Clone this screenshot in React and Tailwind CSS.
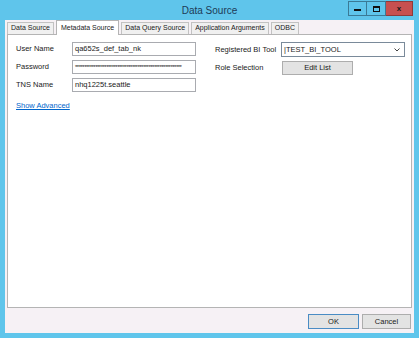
const font = { fontFamily: '"Liberation Sans", Arial, sans-serif' };

function Field({ label, value }) {
  return (
    <div className="flex items-center h-[14px]">
      <span className="w-[56px] text-[7.5px] text-[#1a1a1a]">{label}</span>
      <div className="w-[124px] h-[14px] border border-[#a9abb0] bg-white flex items-center px-[2px] text-[7.5px] text-[#1a1a1a] overflow-hidden whitespace-nowrap">
        {value}
      </div>
    </div>
  );
}

function Tab({ label, active }) {
  if (active) {
    return (
      <div className="h-[15px] px-[4px] -mb-px mr-[2px] bg-white border border-b-0 border-[#b4b4b4] flex items-center text-[7px] text-[#1a1a1a] relative z-10">
        {label}
      </div>
    );
  }
  return (
    <div className="h-[12px] px-[3px] mr-[2px] bg-[#f0f0f0] border border-b-0 border-[#c2c2c2] flex items-center text-[7px] text-[#1a1a1a]">
      {label}
    </div>
  );
}

export default function App() {
  return (
    <div className="w-[419px] h-[338px] bg-[#5fc5eb] flex flex-col" style={font}>
      {/* title bar */}
      <div className="h-[20px] flex items-start">
        <div className="w-[71px]" />
        <div className="flex-1 text-center text-[10px] leading-[21px] text-[#1d3b57]">Data Source</div>
        <div className="flex mt-[1px] mr-[6px]">
          <div className="w-[19px] h-[15px] border border-[#3a7a96] flex items-end justify-center pb-[4px]">
            <div className="w-[7px] h-[2px] bg-[#111]" />
          </div>
          <div className="w-[19px] h-[15px] border border-l-0 border-[#3a7a96] flex items-center justify-center">
            <div className="w-[7px] h-[6px] border-[1.5px] border-t-[2.5px] border-[#111]" />
          </div>
          <div className="w-[27px] h-[15px] bg-[#c75050] border border-l-0 border-[#8e3a3a] flex items-center justify-center text-[8px] font-bold text-[#1a1a1a]">
            x
          </div>
        </div>
      </div>

      {/* client area */}
      <div className="flex-1 mx-[5px] mb-[5px] bg-[#f6f1f5] flex flex-col pl-[2px] pr-[2px]">
        <div className="flex items-end h-[14px]">
          <Tab label="Data Source" />
          <Tab label="Metadata Source" active />
          <Tab label="Data Query Source" />
          <Tab label="Application Arguments" />
          <Tab label="ODBC" />
        </div>
        <div className="h-[274px] bg-white border border-[#b4b4b4] flex flex-col pt-[7px] pl-[8px] pr-[6px]">
          <div className="flex">
            <div className="flex flex-col gap-[4px] w-[201px]">
              <Field label="User Name" value="qa652s_def_tab_nk" />
              <Field label="Password" value={<span className="tracking-[-0.5px] text-[6px]">{'*'.repeat(58)}</span>} />
              <Field label="TNS Name" value="nhq1225t.seattle" />
              <a className="mt-[4px] text-[7.5px] text-[#0066cc] underline cursor-pointer">Show Advanced</a>
            </div>
            <div className="flex flex-col gap-[3px]">
              <div className="flex items-center h-[15px]">
                <span className="w-[66px] text-[7.5px] text-[#1a1a1a]">Registered BI Tool</span>
                <div className="w-[124px] h-[15px] border border-[#7a8a9a] bg-white flex items-center justify-between pl-[2px] pr-[4px] text-[7.5px] text-[#1a1a1a]">
                  <span>|TEST_BI_TOOL</span>
                  <svg width="6" height="4" viewBox="0 0 6 4">
                    <path d="M0.5 0.5 L3 3 L5.5 0.5" fill="none" stroke="#444" strokeWidth="1" />
                  </svg>
                </div>
              </div>
              <div className="flex items-center h-[15px]">
                <span className="w-[67px] text-[7.5px] text-[#1a1a1a]">Role Selection</span>
                <div className="w-[71px] h-[14px] border border-[#adadad] bg-[#e3e3e3] flex items-center justify-center text-[7.5px] text-[#1a1a1a]">
                  Edit List
                </div>
              </div>
            </div>
          </div>
        </div>
        <div className="flex-1 flex justify-end items-center gap-[3px] pr-[1px] pt-[2px]">
          <div className="w-[51px] h-[15px] border border-[#4a8cc4] bg-[#e3e3e3] flex items-center justify-center text-[7.5px] text-[#1a1a1a]">
            OK
          </div>
          <div className="w-[49px] h-[15px] border border-[#adadad] bg-[#e3e3e3] flex items-center justify-center text-[7.5px] text-[#1a1a1a]">
            Cancel
          </div>
        </div>
      </div>
    </div>
  );
}
